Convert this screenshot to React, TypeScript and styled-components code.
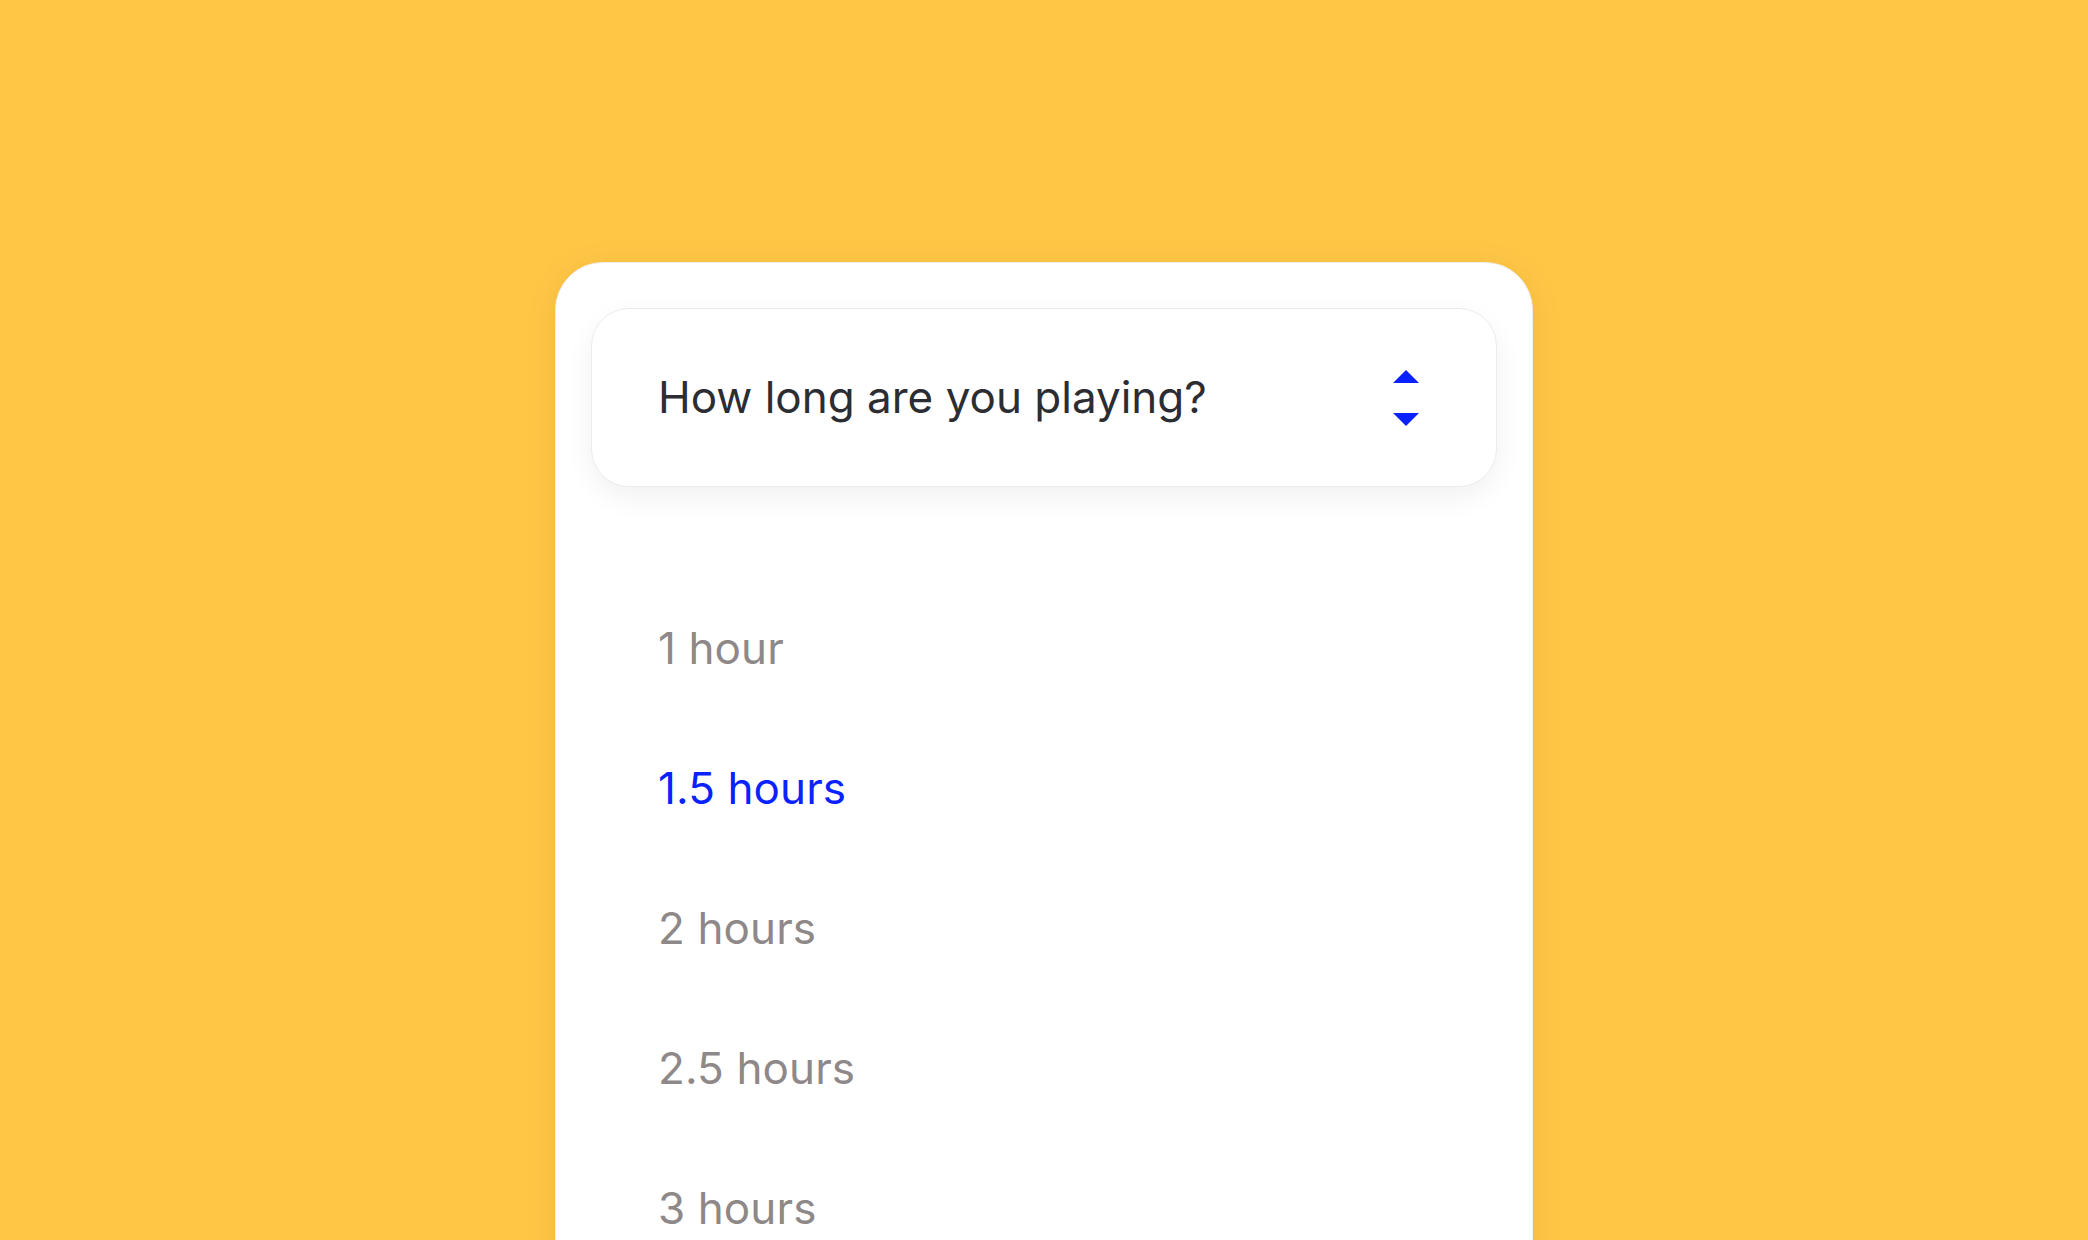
import * as React from "react";
import styled, { createGlobalStyle } from "styled-components";

const GlobalStyle = createGlobalStyle`
  html, body {
    margin: 0;
    padding: 0;
    background: #ffc646;
    overflow: hidden;
  }
  body {
    font-family: Inter, "Noto Sans", sans-serif;
  }
`;

const Page = styled.div`
  display: flex;
  justify-content: center;
  width: 2088px;
  height: 1240px;
  padding-top: 262px;
  box-sizing: border-box;
  background: #ffc646;
`;

const Card = styled.div`
  display: flex;
  flex-direction: column;
  width: 978px;
  height: 1200px;
  box-sizing: border-box;
  padding: 45px 35px 0 35px;
  background: #fff;
  border: 1.5px solid #ececec;
  border-radius: 48px;
  box-shadow: 0 6px 30px rgba(120, 90, 0, 0.12);
  flex-shrink: 0;
`;

const Select = styled.div`
  display: flex;
  align-items: center;
  justify-content: space-between;
  height: 179px;
  box-sizing: border-box;
  padding: 0 77px 2px 66px;
  border: 1.5px solid #ebebeb;
  border-radius: 38px;
  box-shadow: 0 10px 28px rgba(0, 0, 0, 0.06);
`;

const Question = styled.span`
  font-size: 44px;
  font-weight: 400;
  color: #2b2d33;
`;

const Arrows = styled.div`
  display: flex;
  flex-direction: column;
  gap: 30px;
  padding-top: 2px;
`;

const List = styled.ul`
  list-style: none;
  margin: 0;
  padding: 91px 0 0 67px;
`;

const Option = styled.li<{ $active?: boolean }>`
  height: 140px;
  display: flex;
  align-items: center;
  font-size: 44px;
  font-weight: 400;
  letter-spacing: 0.1px;
  color: ${(p) => (p.$active ? "#0a22ff" : "#8e8888")};
`;

const options = ["1 hour", "1.5 hours", "2 hours", "2.5 hours", "3 hours"];

function Triangle({ up }: { up?: boolean }) {
  return (
    <svg width="26" height="13" viewBox="0 0 26 13">
      <path d={up ? "M13 0 L26 13 L0 13 Z" : "M0 0 L26 0 L13 13 Z"} fill="#0a22ff" />
    </svg>
  );
}

export default function App() {
  return (
    <>
      <GlobalStyle />
      <Page>
        <Card>
          <Select>
            <Question>How long are you playing?</Question>
            <Arrows>
              <Triangle up />
              <Triangle />
            </Arrows>
          </Select>
          <List>
            {options.map((o) => (
              <Option key={o} $active={o === "1.5 hours"}>
                {o}
              </Option>
            ))}
          </List>
        </Card>
      </Page>
    </>
  );
}
